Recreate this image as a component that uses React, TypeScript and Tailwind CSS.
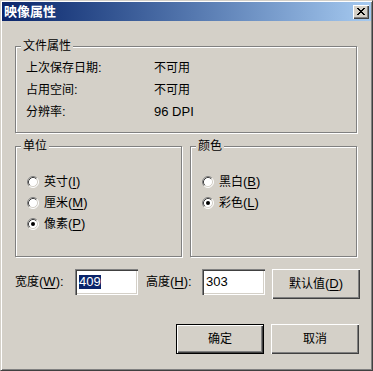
import type { ReactNode } from "react";

const font = { fontFamily: '"Liberation Sans", "Noto Sans CJK SC", sans-serif' };

// latin runs are a touch bigger than the CJK glyphs in the original
function L({ children, u }: { children: ReactNode; u?: boolean }) {
  return <span className={`text-[13px] ${u ? "underline underline-offset-2" : ""}`}>{children}</span>;
}

function Key({ k }: { k: string }) {
  return (
    <L>
      (<span className="underline underline-offset-2">{k}</span>)
    </L>
  );
}

function Radio({ checked }: { checked?: boolean }) {
  return (
    <svg width="12" height="12" viewBox="0 0 12 12" className="shrink-0">
      <circle cx="6" cy="6" r="5" fill="#fff" />
      <path d="M2.11 9.89 A5.5 5.5 0 0 1 9.89 2.11" fill="none" stroke="#808080" />
      <path d="M9.89 2.11 A5.5 5.5 0 0 1 2.11 9.89" fill="none" stroke="#fff" />
      <path d="M2.82 9.18 A4.5 4.5 0 0 1 9.18 2.82" fill="none" stroke="#404040" />
      <path d="M9.18 2.82 A4.5 4.5 0 0 1 2.82 9.18" fill="none" stroke="#d4d0c8" />
      {checked && <circle cx="6" cy="6" r="2" fill="#000" />}
    </svg>
  );
}

function Group({ title, className, children }: { title: string; className: string; children: ReactNode }) {
  return (
    <div className={`border border-[#808080] shadow-[1px_1px_0_#fff,inset_1px_1px_0_#fff] ${className}`}>
      <div className="-mt-[8px] ml-[5px] w-fit bg-[#d4d0c8] px-[2px] leading-[14px]">{title}</div>
      {children}
    </div>
  );
}

function Button({ children, primary }: { children: ReactNode; primary?: boolean }) {
  return (
    <div
      className={`flex h-[30px] w-[88px] items-center justify-center bg-[#d4d0c8] ${
        primary
          ? "border border-black shadow-[inset_1px_1px_0_#fff,inset_-1px_-1px_0_#404040,inset_-2px_-2px_0_#808080]"
          : "shadow-[inset_1px_1px_0_#fff,inset_-1px_-1px_0_#404040,inset_-2px_-2px_0_#808080]"
      }`}
    >
      {children}
    </div>
  );
}

function Field({ value, selected }: { value: string; selected?: boolean }) {
  return (
    <div className="flex h-[26px] w-[63px] items-center bg-white pl-[4px] shadow-[inset_1px_1px_0_#808080,inset_2px_2px_0_#404040,inset_-1px_-1px_0_#fff,inset_-2px_-2px_0_#d4d0c8]">
      <span className={`text-[13px] leading-[14px] ${selected ? "bg-[#0a246a] text-white" : "text-black"}`}>{value}</span>
    </div>
  );
}

const props = [
  { label: "上次保存日期", value: "不可用" },
  { label: "占用空间", value: "不可用" },
  { label: "分辨率", value: "96 DPI" },
];

export default function App() {
  return (
    <div
      style={font}
      className="h-[371px] w-[373px] border border-t-[#d4d0c8] border-l-[#d4d0c8] border-r-[#404040] border-b-[#404040] bg-[#d4d0c8] p-[1px] text-[12px] text-black shadow-[inset_1px_1px_0_#fff,inset_-1px_-1px_0_#808080]"
    >
      {/* title bar */}
      <div className="flex h-[19px] items-center justify-between bg-gradient-to-r from-[#0a246a] to-[#a6caf0] pl-[2px] pr-[2px]">
        <span className="text-[13px] font-bold leading-[19px] text-white">映像属性</span>
        <div className="flex h-[14px] w-[16px] items-center justify-center bg-[#d4d0c8] shadow-[inset_1px_1px_0_#fff,inset_-1px_-1px_0_#404040,inset_-2px_-2px_0_#808080]">
          <svg width="8" height="7" viewBox="0 0 8 7" shapeRendering="crispEdges" className="-mt-[1px]">
            <path
              d="M0 0h2v1H0zM6 0h2v1H6zM1 1h2v1H1zM5 1h2v1H5zM2 2h4v1H2zM3 3h2v1H3zM2 4h4v1H2zM1 5h2v1H1zM5 5h2v1H5zM0 6h2v1H0zM6 6h2v1H6z"
              fill="#000"
            />
          </svg>
        </div>
      </div>

      <Group title="文件属性" className="mx-[13px] mt-[25px] h-[87px] w-[342px]">
        <div className="mt-[4px] pl-[10px]">
          {props.map((p) => (
            <div key={p.label} className="flex h-[22px] items-center">
              <span className="w-[128px]">
                {p.label}
                <L>:</L>
              </span>
              {p.value === "96 DPI" ? <L>{p.value}</L> : <span>{p.value}</span>}
            </div>
          ))}
        </div>
      </Group>

      <div className="ml-[13px] mt-[13px] flex gap-[8px]">
        <Group title="单位" className="h-[111px] w-[167px]">
          <div className="mt-[18px] pl-[11px]">
            <div className="flex h-[21px] items-center gap-[5px]">
              <Radio />
              <span>英寸<Key k="I" /></span>
            </div>
            <div className="flex h-[21px] items-center gap-[5px]">
              <Radio />
              <span>厘米<Key k="M" /></span>
            </div>
            <div className="flex h-[21px] items-center gap-[5px]">
              <Radio checked />
              <span>像素<Key k="P" /></span>
            </div>
          </div>
        </Group>
        <Group title="颜色" className="h-[111px] w-[167px]">
          <div className="mt-[18px] pl-[11px]">
            <div className="flex h-[21px] items-center gap-[5px]">
              <Radio />
              <span>黑白<Key k="B" /></span>
            </div>
            <div className="flex h-[21px] items-center gap-[5px]">
              <Radio checked />
              <span>彩色<Key k="L" /></span>
            </div>
          </div>
        </Group>
      </div>

      <div className="ml-[13px] mt-[12px] flex h-[30px] items-start">
        <span className="flex h-[26px] w-[60px] items-center">
          宽度<Key k="W" />
          <L>:</L>
        </span>
        <Field value="409" selected />
        <span className="ml-[8px] flex h-[26px] w-[56px] items-center">
          高度<Key k="H" />
          <L>:</L>
        </span>
        <Field value="303" />
        <div className="ml-[7px]">
          <Button>
            默认值<Key k="D" />
          </Button>
        </div>
      </div>

      <div className="mt-[25px] flex justify-end gap-[7px] pr-[12px]">
        <Button primary>确定</Button>
        <Button>取消</Button>
      </div>
    </div>
  );
}
